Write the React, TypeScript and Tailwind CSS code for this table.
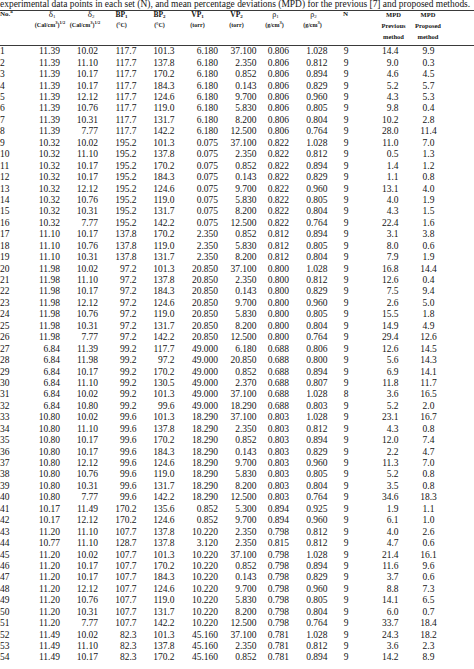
import React from "react";

const raw = `1 11.39 10.02 117.7 101.3 6.180 37.100 0.806 1.028 9 14.4 9.9
2 11.39 11.10 117.7 137.8 6.180 2.350 0.806 0.812 9 9.0 0.3
3 11.39 10.17 117.7 170.2 6.180 0.852 0.806 0.894 9 4.6 4.5
4 11.39 10.17 117.7 184.3 6.180 0.143 0.806 0.829 9 5.2 5.7
5 11.39 12.12 117.7 124.6 6.180 9.700 0.806 0.960 9 4.3 5.3
6 11.39 10.76 117.7 119.0 6.180 5.830 0.806 0.805 9 9.8 0.4
7 11.39 10.31 117.7 131.7 6.180 8.200 0.806 0.804 9 10.2 2.8
8 11.39 7.77 117.7 142.2 6.180 12.500 0.806 0.764 9 28.0 11.4
9 10.32 10.02 195.2 101.3 0.075 37.100 0.822 1.028 9 11.0 7.0
10 10.32 11.10 195.2 137.8 0.075 2.350 0.822 0.812 9 0.5 1.3
11 10.32 10.17 195.2 170.2 0.075 0.852 0.822 0.894 9 1.4 1.2
12 10.32 10.17 195.2 184.3 0.075 0.143 0.822 0.829 9 1.1 0.8
13 10.32 12.12 195.2 124.6 0.075 9.700 0.822 0.960 9 13.1 4.0
14 10.32 10.76 195.2 119.0 0.075 5.830 0.822 0.805 9 4.0 1.9
15 10.32 10.31 195.2 131.7 0.075 8.200 0.822 0.804 9 4.3 1.5
16 10.32 7.77 195.2 142.2 0.075 12.500 0.822 0.764 9 22.4 1.6
17 11.10 10.17 137.8 170.2 2.350 0.852 0.812 0.894 9 3.1 3.8
18 11.10 10.76 137.8 119.0 2.350 5.830 0.812 0.805 9 8.0 0.6
19 11.10 10.31 137.8 131.7 2.350 8.200 0.812 0.804 9 7.9 1.9
20 11.98 10.02 97.2 101.3 20.850 37.100 0.800 1.028 9 16.8 14.4
21 11.98 11.10 97.2 137.8 20.850 2.350 0.800 0.812 9 12.6 0.4
22 11.98 10.17 97.2 184.3 20.850 0.143 0.800 0.829 9 7.5 9.4
23 11.98 12.12 97.2 124.6 20.850 9.700 0.800 0.960 9 2.6 5.0
24 11.98 10.76 97.2 119.0 20.850 5.830 0.800 0.805 9 15.5 1.8
25 11.98 10.31 97.2 131.7 20.850 8.200 0.800 0.804 9 14.9 4.9
26 11.98 7.77 97.2 142.2 20.850 12.500 0.800 0.764 9 29.4 12.6
27 6.84 11.39 99.2 117.7 49.000 6.180 0.688 0.806 9 12.6 14.5
28 6.84 11.98 99.2 97.2 49.000 20.850 0.688 0.800 9 5.6 14.3
29 6.84 10.17 99.2 170.2 49.000 0.852 0.688 0.894 9 6.9 14.1
30 6.84 11.10 99.2 130.5 49.000 2.370 0.688 0.807 9 11.8 11.7
31 6.84 10.02 99.2 101.3 49.000 37.100 0.688 1.028 8 3.6 16.5
32 6.84 10.80 99.2 99.6 49.000 18.290 0.688 0.803 9 5.2 2.0
33 10.80 10.02 99.6 101.3 18.290 37.100 0.803 1.028 9 23.1 16.7
34 10.80 11.10 99.6 137.8 18.290 2.350 0.803 0.812 9 4.3 0.8
35 10.80 10.17 99.6 170.2 18.290 0.852 0.803 0.894 9 12.0 7.4
36 10.80 10.17 99.6 184.3 18.290 0.143 0.803 0.829 9 2.2 4.7
37 10.80 12.12 99.6 124.6 18.290 9.700 0.803 0.960 9 11.3 7.0
38 10.80 10.76 99.6 119.0 18.290 5.830 0.803 0.805 9 5.2 0.8
39 10.80 10.31 99.6 131.7 18.290 8.200 0.803 0.804 9 3.5 0.8
40 10.80 7.77 99.6 142.2 18.290 12.500 0.803 0.764 9 34.6 18.3
41 10.17 11.49 170.2 135.6 0.852 5.300 0.894 0.925 9 1.9 1.1
42 10.17 12.12 170.2 124.6 0.852 9.700 0.894 0.960 9 6.1 1.0
43 11.20 11.10 107.7 137.8 10.220 2.350 0.798 0.812 9 4.0 2.6
44 10.77 11.10 128.7 137.8 3.120 2.350 0.815 0.812 9 4.7 0.6
45 11.20 10.02 107.7 101.3 10.220 37.100 0.798 1.028 9 21.4 16.1
46 11.20 10.17 107.7 170.2 10.220 0.852 0.798 0.894 9 11.6 9.6
47 11.20 10.17 107.7 184.3 10.220 0.143 0.798 0.829 9 3.7 0.6
48 11.20 12.12 107.7 124.6 10.220 9.700 0.798 0.960 9 8.8 7.3
49 11.20 10.76 107.7 119.0 10.220 5.830 0.798 0.805 9 14.1 6.5
50 11.20 10.31 107.7 131.7 10.220 8.200 0.798 0.804 9 6.0 0.7
51 11.20 7.77 107.7 142.2 10.220 12.500 0.798 0.764 9 33.7 18.4
52 11.49 10.02 82.3 101.3 45.160 37.100 0.781 1.028 9 24.3 18.2
53 11.49 11.10 82.3 137.8 45.160 2.350 0.781 0.812 9 3.6 2.3
54 11.49 10.17 82.3 170.2 45.160 0.852 0.781 0.894 9 14.2 8.9`;

const rows = raw.split("\n").map((l) => l.trim().split(/\s+/));

// alignment per data column
const align = [
  "text-left",
  "text-right",
  "text-right",
  "text-right",
  "text-right",
  "text-right",
  "text-right",
  "text-right",
  "text-right",
  "text-right",
  "text-right",
  "text-center",
];

const dataGrid =
  "grid grid-cols-[20px_40px_38px_38.5px_38px_43.5px_38.5px_32.5px_38.5px_21px_50px_60px]";
const headGrid =
  "grid grid-cols-[32px_36px_34px_39px_37px_39px_39px_37px_39px_27px_17px_35px_34px]";

function Unit({ children }: { children: React.ReactNode }) {
  return <div className="h-[11px] leading-[11px] text-[6px] font-bold whitespace-nowrap">{children}</div>;
}

function Sym({ children, className = "" }: { children: React.ReactNode; className?: string }) {
  return <div className={`h-[11px] leading-[11px] whitespace-nowrap ${className}`}>{children}</div>;
}

export default function App() {
  return (
    <div className="w-[474px] h-[669px] overflow-hidden bg-white text-[#151515] font-['Liberation_Serif','Times_New_Roman',serif]">
      {/* caption, cut at the top */}
      <div className="h-[10px] overflow-hidden">
        <div className="-mt-[1.5px] text-[9.45px] leading-[10px] whitespace-nowrap">
          experimental data points in each set (N), and mean percentage deviations (MPD) for the previous [7] and proposed methods.
        </div>
      </div>
      <div className="h-px bg-[#3a3a3a]" />

      {/* Header */}
      <div className="h-[36.8px]">
        <div className={`${headGrid} -mt-[2.5px]`}>
          <div className="text-left">
            <Sym className="text-[7px] font-bold">
              No.<sup className="text-[5px]">a</sup>
            </Sym>
          </div>
          <div className="flex flex-col items-center">
            <Sym className="text-[9px] pl-[4px]">
              δ<sub className="text-[5px]">1</sub>
            </Sym>
            <Unit>
              (Cal/cm<sup>3</sup>)<sup>1/2</sup>
            </Unit>
          </div>
          <div className="flex flex-col items-center">
            <Sym className="text-[9px] pl-[12px]">
              δ<sub className="text-[5px]">2</sub>
            </Sym>
            <Unit>
              (Cal/cm<sup>3</sup>)<sup>1/2</sup>
            </Unit>
          </div>
          <div className="flex flex-col items-center">
            <Sym className="text-[7.5px] font-bold">
              BP<sub className="text-[5px]">1</sub>
            </Sym>
            <Unit>(°C)</Unit>
          </div>
          <div className="flex flex-col items-center">
            <Sym className="text-[7.5px] font-bold">
              BP<sub className="text-[5px]">2</sub>
            </Sym>
            <Unit>(°C)</Unit>
          </div>
          <div className="flex flex-col items-center">
            <Sym className="text-[7.5px] font-bold">
              VP<sub className="text-[5px]">1</sub>
            </Sym>
            <Unit>(torr)</Unit>
          </div>
          <div className="flex flex-col items-center">
            <Sym className="text-[7.5px] font-bold">
              VP<sub className="text-[5px]">2</sub>
            </Sym>
            <Unit>(torr)</Unit>
          </div>
          <div className="flex flex-col items-center">
            <Sym className="text-[8px] pl-[2px]">
              ρ<sub className="text-[5px]">1</sub>
            </Sym>
            <Unit>
              (g/cm<sup>3</sup>)
            </Unit>
          </div>
          <div className="flex flex-col items-center">
            <Sym className="text-[8px] pl-[2px]">
              ρ<sub className="text-[5px]">2</sub>
            </Sym>
            <Unit>
              (g/cm<sup>3</sup>)
            </Unit>
          </div>
          <div className="flex flex-col items-center">
            <Sym className="text-[7px] font-bold">N</Sym>
          </div>
          <div />
          <div className="flex flex-col items-center text-[6.5px] font-bold">
            <Sym>MPD</Sym>
            <Sym>Previous</Sym>
            <Sym>method</Sym>
          </div>
          <div className="flex flex-col items-center text-[6.5px] font-bold">
            <Sym>MPD</Sym>
            <Sym>Proposed</Sym>
            <Sym>method</Sym>
          </div>
        </div>
      </div>
      <div className="h-px bg-[#3a3a3a]" />

      {/* Body */}
      <div className="text-[9.5px]">
        {rows.map((r) => (
          <div key={r[0]} className={`${dataGrid} h-[11.44px] leading-[11.44px]`}>
            {r.map((v, i) => (
              <div key={i} className={`${align[i]} whitespace-nowrap`}>
                {v}
              </div>
            ))}
          </div>
        ))}
      </div>
    </div>
  );
}
